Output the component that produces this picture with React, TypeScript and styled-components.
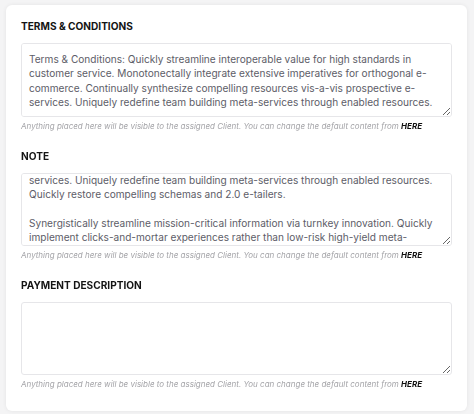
import React, { useEffect, useRef } from 'react';
import styled, { createGlobalStyle } from 'styled-components';

const GlobalStyle = createGlobalStyle`
  html, body {
    margin: 0;
    background: #f4f4f5;
  }
  body {
    padding: 5px 7px 4px 6px;
    font-family: Inter, "Noto Sans", "Liberation Sans", sans-serif;
  }
`;

const Card = styled.div`
  background: #fff;
  border-radius: 6px;
  box-shadow: 0 0 4px rgba(0, 0, 0, 0.07);
  padding: 14px 15px 21px 15px;
  display: flex;
  flex-direction: column;
  gap: 17px;
`;

const Section = styled.div`
  display: flex;
  flex-direction: column;
`;

const Label = styled.label`
  font-size: 10.1px;
  line-height: 14px;
  font-weight: 700;
  color: #141414;
  margin-bottom: 10px;
`;

const TextArea = styled.textarea<{ $height: number }>`
  box-sizing: border-box;
  width: 100%;
  height: ${(p) => p.$height}px;
  border: 1px solid #e6e6e9;
  border-radius: 3px;
  padding: 8px 7px;
  font-family: Inter, "Noto Sans", "Liberation Sans", sans-serif;
  font-size: 10.1px;
  line-height: 14.3px;
  color: #5d5d68;
  background: #fff;
  outline: none;
  resize: vertical;
  scrollbar-width: none;
  &::-webkit-scrollbar {
    display: none;
  }
`;

const Helper = styled.p`
  margin: 4px 0 0 0;
  font-size: 8px;
  line-height: 11px;
  font-style: italic;
  color: #a4a4a8;
`;

const HelperLink = styled.a`
  font-weight: 700;
  color: #111;
  text-decoration: none;
`;

const TERMS =
  'Terms & Conditions: Quickly streamline interoperable value for high standards in customer service. Monotonectally integrate extensive imperatives for orthogonal e-commerce. Continually synthesize compelling resources vis-a-vis prospective e-services. Uniquely redefine team building meta-services through enabled resources.';

const NOTE =
  TERMS +
  ' Quickly restore compelling schemas and 2.0 e-tailers.\n\nSynergistically streamline mission-critical information via turnkey innovation. Quickly implement clicks-and-mortar experiences rather than low-risk high-yield meta-services.';

type FieldProps = {
  label: string;
  value: string;
  height: number;
  scrollTo?: number;
};

const Field = ({ label, value, height, scrollTo }: FieldProps) => {
  const ref = useRef<HTMLTextAreaElement>(null);

  useEffect(() => {
    if (ref.current && scrollTo) ref.current.scrollTop = scrollTo;
  }, [scrollTo]);

  return (
    <Section>
      <Label>{label}</Label>
      <TextArea ref={ref} $height={height} defaultValue={value} />
      <Helper>
        Anything placed here will be visible to the assigned Client. You can change the default
        content from <HelperLink href="#">HERE</HelperLink>
      </Helper>
    </Section>
  );
};

const App = () => {
  return (
    <>
      <GlobalStyle />
      <Card>
        <Field label="TERMS & CONDITIONS" value={TERMS} height={74} />
        <Field label="NOTE" value={NOTE} height={73} scrollTo={52} />
        <Field label="PAYMENT DESCRIPTION" value="" height={73} />
      </Card>
    </>
  );
};

export default App;
